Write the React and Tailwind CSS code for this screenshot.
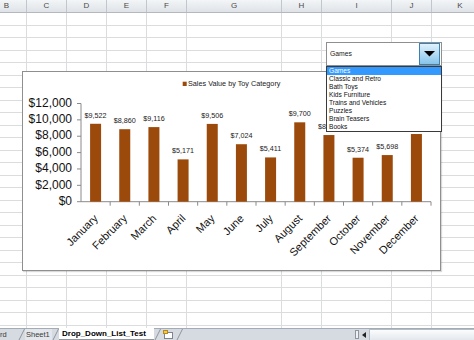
import React from 'react';

// Colonnes visibles de la feuille (la colonne B est coupée à gauche)
const columns = [
  { name: 'B', cls: 'w-[40px] -ml-[13px]' },
  { name: 'C', cls: 'w-[40px]' },
  { name: 'D', cls: 'w-[40px]' },
  { name: 'E', cls: 'w-[40px]' },
  { name: 'F', cls: 'w-[40px]' },
  { name: 'G', cls: 'w-[95px]' },
  { name: 'H', cls: 'w-[40px]' },
  { name: 'I', cls: 'w-[70px]' },
  { name: 'J', cls: 'w-[40px]' },
  { name: 'K', cls: 'w-[57px]' },
];

const sales = [
  ['January', 9522],
  ['February', 8860],
  ['March', 9116],
  ['April', 5171],
  ['May', 9506],
  ['June', 7024],
  ['July', 5411],
  ['August', 9700],
  ['September', 8145],
  ['October', 5374],
  ['November', 5698],
  ['December', 8271],
];

const categories = [
  'Games',
  'Classic and Retro',
  'Bath Toys',
  'Kids Furniture',
  'Trains and Vehicles',
  'Puzzles',
  'Brain Teasers',
  'Books',
];

const rows = Array.from({ length: 26 }, (_, i) => i);

function Chart() {
  // repères du graphique (coordonnées de la page moins le coin du cadre)
  const ox = 23;
  const oy = 72;
  const axisX = 81 - ox;
  const axisEnd = 431 - ox;
  const bottom = 201.7 - oy;
  const plotH = 98.2;
  const catW = (axisEnd - axisX) / 12;
  const yOf = (v) => bottom - (v / 12000) * plotH;
  const font = "'Liberation Sans', Arial, sans-serif";

  return (
    <div className="absolute left-[22px] top-[71px] w-[419px] h-[200px] bg-white border border-[#8f8f8f] shadow-[1px_1px_1px_rgba(0,0,0,0.15)]">
      <svg width="417" height="198" viewBox="0 0 417 198" className="block">
        {/* Légende */}
        <rect x={159.7} y={9.7} width={4} height={4.3} fill="#9c4a0b" />
        <text x={165} y={12} fontSize="7.25" fontFamily={font} fill="#222" dominantBaseline="middle">
          Sales Value by Toy Category
        </text>

        {/* Axe vertical */}
        <line x1={axisX} y1={yOf(12000)} x2={axisX} y2={bottom} stroke="#8a8a8a" strokeWidth="1" />
        {[0, 2000, 4000, 6000, 8000, 10000, 12000].map((v) => (
          <g key={v}>
            <line x1={axisX - 4} y1={yOf(v)} x2={axisX} y2={yOf(v)} stroke="#8a8a8a" strokeWidth="1" />
            <text
              x={49}
              y={yOf(v)}
              fontSize="12"
              fontFamily={font}
              fill="#111"
              textAnchor="end"
              dominantBaseline="middle"
            >
              ${v.toLocaleString('en-US')}
            </text>
          </g>
        ))}

        {/* Axe horizontal */}
        <line x1={axisX} y1={bottom} x2={axisEnd} y2={bottom} stroke="#8a8a8a" strokeWidth="1" />
        {sales.map((_, i) => (
          <line
            key={i}
            x1={axisX + (i + 1) * catW}
            y1={bottom}
            x2={axisX + (i + 1) * catW}
            y2={bottom + 4}
            stroke="#8a8a8a"
            strokeWidth="1"
          />
        ))}

        {/* Barres + étiquettes */}
        {sales.map(([month, v], i) => {
          const cx = axisX + (i + 0.5) * catW;
          const top = yOf(v);
          return (
            <g key={month}>
              <rect x={cx - 5.5} y={top} width={11} height={bottom - top} fill="#9c4a0b" />
              <text
                x={cx}
                y={top - 8}
                fontSize="7.2"
                fontFamily={font}
                fill="#222"
                textAnchor="middle"
                dominantBaseline="middle"
              >
                ${v.toLocaleString('en-US')}
              </text>
              <text
                x={cx + 1}
                y={145}
                fontSize="11"
                fontFamily={font}
                fill="#111"
                textAnchor="end"
                dominantBaseline="middle"
                transform={`rotate(-45 ${cx + 1} 145)`}
              >
                {month}
              </text>
            </g>
          );
        })}
      </svg>
    </div>
  );
}

function DropDown() {
  return (
    <>
      <div className="absolute left-[326px] top-[42px] w-[116px] h-[24px] bg-white border border-[#8e8f8f] flex items-center">
        <span className="pl-[3px] flex-1 text-[6.8px] text-[#222]">Games</span>
        <div className="w-[21px] h-[22px] mr-px bg-gradient-to-b from-[#dff1fc] to-[#86c4ea] border border-[#3c7fb1] flex items-center justify-center">
          <svg width="11" height="6" viewBox="0 0 11 6">
            <polygon points="0,0 11,0 5.5,5.5" fill="#000" />
          </svg>
        </div>
      </div>
      <div className="absolute left-[326px] top-[66px] w-[116px] h-[66px] bg-white border border-[#3a3a3a]">
        {categories.map((c, i) => (
          <div
            key={c}
            className={`h-[8px] leading-[8px] pl-[2px] text-[6.6px] whitespace-nowrap ${
              i === 0 ? 'bg-[#3399ff] text-white' : 'text-[#111]'
            }`}
          >
            {c}
          </div>
        ))}
      </div>
    </>
  );
}

function Slant() {
  return (
    <svg width="7" height="12" viewBox="0 0 7 12" className="shrink-0">
      <line x1="0.5" y1="12" x2="6.5" y2="0" stroke="#8e959e" strokeWidth="1" />
    </svg>
  );
}

function TabBar() {
  return (
    <div className="flex h-[12px] bg-[#d6dbe1] border-t border-[#a3abb5] text-[7.5px] leading-[11px] text-[#3a3a3a]">
      <div className="w-[18px] shrink-0">rd</div>
      <Slant />
      <div className="w-[27px] shrink-0 pl-px bg-[#e3e6ea]">Sheet1</div>
      <Slant />
      <div className="w-[95px] shrink-0 -mt-px pl-[3px] bg-white font-bold text-[8px] text-black border-b border-[#8e959e]">
        Drop_Down_List_Test
      </div>
      <Slant />
      <div className="w-[15px] shrink-0 flex items-center justify-center">
        <svg width="11" height="9" viewBox="0 0 11 9">
          <rect x="1.5" y="2.5" width="8" height="6" fill="#fff" stroke="#7d8590" />
          <rect x="0.5" y="0.5" width="4" height="3" fill="#f2c94c" stroke="#b88a1a" />
        </svg>
      </div>
      <Slant />
      <div className="flex-1" />
      <div className="w-[4px] shrink-0 my-px bg-[#eef0f3] border border-[#8e959e]" />
      <div className="w-[10px] shrink-0 flex items-center justify-center">
        <svg width="4" height="6" viewBox="0 0 4 6">
          <polygon points="4,0 4,6 0,3" fill="#222" />
        </svg>
      </div>
      <div className="w-[105px] shrink-0 bg-gradient-to-b from-[#fbfcfd] to-[#e4e8ed] border-l border-t border-[#b5bcc5]" />
    </div>
  );
}

export default function App() {
  return (
    <div className="relative w-[474px] h-[340px] overflow-hidden bg-white font-['Liberation_Sans',Arial,sans-serif]">
      {/* En-têtes de colonnes */}
      <div className="flex h-[13px] bg-gradient-to-b from-[#f3f5f7] to-[#dfe3e8] border-b border-[#b3b8be]">
        {columns.map((c) => (
          <div
            key={c.name}
            className={`${c.cls} shrink-0 border-r border-[#c2c7cd] text-center text-[8px] leading-[12px] text-[#4a4a4a]`}
          >
            {c.name}
          </div>
        ))}
      </div>

      {/* Grille */}
      <div className="h-[315px] overflow-hidden">
        {rows.map((r) => (
          <div key={r} className="flex h-[12.5px]">
            {columns.map((c) => (
              <div key={c.name} className={`${c.cls} shrink-0 border-r border-b border-[#dadcdd]`} />
            ))}
          </div>
        ))}
      </div>

      <TabBar />

      <Chart />
      <DropDown />
    </div>
  );
}
